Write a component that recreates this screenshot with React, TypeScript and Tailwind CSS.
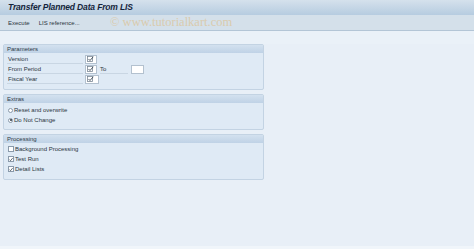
import React from "react";

const font = { fontFamily: "'Liberation Sans', Arial, sans-serif" };

function ReqIcon() {
  return (
    <svg width="7" height="6" viewBox="0 0 7 6" className="block">
      <rect x="0.5" y="0.5" width="5" height="5" fill="none" stroke="#7b8896" strokeWidth="0.8" />
      <path d="M1.5 3 L3 4.5 L6.3 0.7" fill="none" stroke="#3d4a57" strokeWidth="0.9" />
    </svg>
  );
}

function Input({ req = true, w = 12 }: { req?: boolean; w?: number }) {
  return (
    <div
      className="h-[9px] bg-white border border-[#b3c1cf] flex items-center pl-[1px]"
      style={{ width: w }}
    >
      {req && <ReqIcon />}
    </div>
  );
}

function Group({ title, children, bodyH }: { title: string; children: React.ReactNode; bodyH: string }) {
  return (
    <div className="w-[261px] border border-[#c3d3e3] rounded-[2px] bg-[#dfeaf5]">
      <div className="h-[8px] bg-gradient-to-b from-[#d3e1ef] to-[#bfd2e6] flex items-center pl-[3px] text-[6px] text-[#2e3a46] leading-none">
        {title}
      </div>
      <div className={bodyH}>{children}</div>
    </div>
  );
}

function Row({ label, children }: { label: string; children?: React.ReactNode }) {
  return (
    <div className="h-[10px] flex items-center">
      <div className="w-[76px] h-full ml-[3px] flex items-center border-b border-[#c9d6e3] text-[6px] text-[#2b3641] leading-none pl-[1px]">
        {label}
      </div>
      <div className="ml-[2px] flex items-center">{children}</div>
    </div>
  );
}

export default function App() {
  return (
    <div className="w-[474px] h-[249px] bg-[#e8eff7] overflow-hidden flex flex-col" style={font}>
      <div className="h-[15px] shrink-0 bg-gradient-to-b from-[#d5e1ec] to-[#b6cce0] flex items-center pl-[8px]">
        <span
          className="text-[8.5px] font-bold italic text-[#14243a] leading-none"
          style={{ letterSpacing: "-0.15px" }}
        >
          Transfer Planned Data From LIS
        </span>
      </div>
      <div className="h-[16px] shrink-0 bg-[#d4e0ea] border-b border-[#b3c5d6] flex items-center pl-[8px] relative">
        <span className="text-[6px] text-[#2b3641] leading-none">Execute</span>
        <span className="text-[6px] text-[#2b3641] leading-none ml-[9px]">LIS reference...</span>
        <span
          className="absolute left-[110px] top-[1px] text-[12.5px] leading-none text-[#dacbae]"
          style={{ fontFamily: "'Liberation Serif', 'DejaVu Serif', serif" }}
        >
          © www.tutorialkart.com
        </span>
      </div>
      <div className="h-[13px] shrink-0 bg-[#eaf1f8]" />
      <div className="pl-[3px] flex flex-col gap-[4px]">
        <Group title="Parameters" bodyH="h-[36px] pt-[1px]">
          <Row label="Version">
            <Input />
          </Row>
          <Row label="From Period">
            <Input />
            <div className="ml-[3px] w-[28px] h-[10px] flex items-center border-b border-[#c9d6e3] text-[6px] text-[#2b3641] leading-none">
              To
            </div>
            <div className="ml-[3px]">
              <Input req={false} w={13} />
            </div>
          </Row>
          <Row label="Fiscal Year">
            <Input w={14} />
          </Row>
        </Group>
        <Group title="Extras" bodyH="h-[26px] pt-[2px] pl-[4px]">
          <div className="h-[10px] flex items-center gap-[1px]">
            <div className="w-[5px] h-[5px] rounded-full bg-white border border-[#8a9aab]" />
            <span className="text-[6px] text-[#2b3641] leading-none">Reset and overwrite</span>
          </div>
          <div className="h-[10px] flex items-center gap-[1px]">
            <div className="w-[5px] h-[5px] rounded-full bg-white border border-[#8a9aab] flex items-center justify-center">
              <div className="w-[2px] h-[2px] rounded-full bg-[#2b3641]" />
            </div>
            <span className="text-[6px] text-[#2b3641] leading-none">Do Not Change</span>
          </div>
        </Group>
        <Group title="Processing" bodyH="h-[36px] pt-[1px] pl-[4px]">
          {[
            ["Background Processing", false],
            ["Test Run", true],
            ["Detail Lists", true],
          ].map(([l, c]) => (
            <div key={l as string} className="h-[10px] flex items-center gap-[1px]">
              <div className="w-[6px] h-[6px] bg-white border border-[#8a9aab] flex items-center justify-center">
                {c && (
                  <svg width="5" height="5" viewBox="0 0 5 5" className="block">
                    <path d="M0.6 2.6 L1.9 4 L4.5 0.8" fill="none" stroke="#2b3641" strokeWidth="0.9" />
                  </svg>
                )}
              </div>
              <span className="text-[6px] text-[#2b3641] leading-none">{l as string}</span>
            </div>
          ))}
        </Group>
      </div>
      <div className="flex-1" />
      <div className="h-[3px] shrink-0 bg-[#f0f5fa]" />
    </div>
  );
}
